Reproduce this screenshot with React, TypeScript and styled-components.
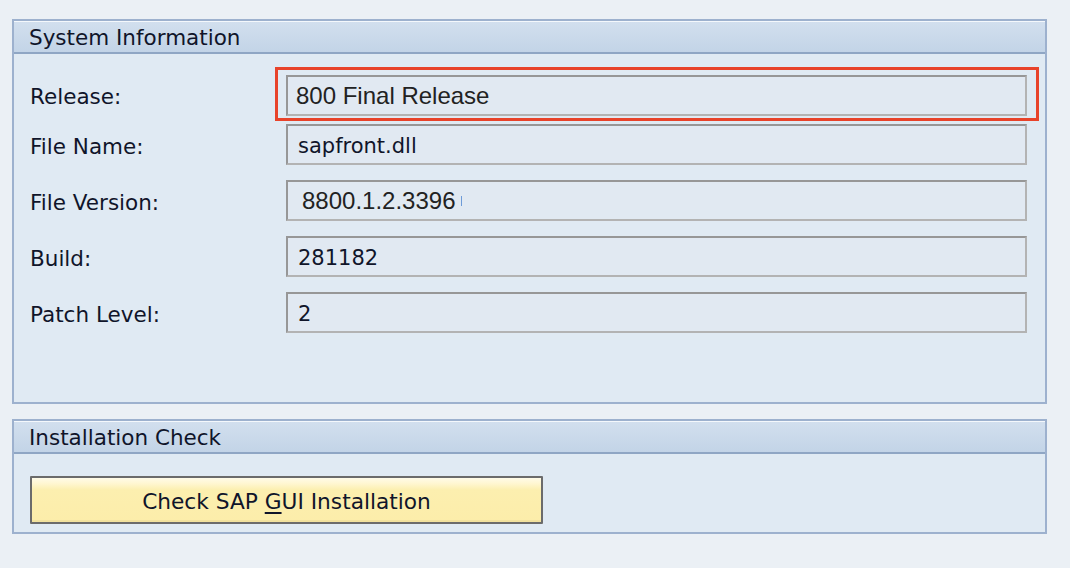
import React from "react";
import styled, { createGlobalStyle } from "styled-components";

const Global = createGlobalStyle`
  html, body { margin: 0; padding: 0; background: #ebf0f5; }
  body { font-family: "DejaVu Sans", "Liberation Sans", sans-serif; color: #101522; }
`;

const Page = styled.div`
  width: 1070px;
  height: 568px;
  box-sizing: border-box;
  padding: 19px 23px 0 12px;
  display: flex;
  flex-direction: column;
  gap: 15px;
  background: #ebf0f5;
`;

const Panel = styled.section<{ $height: number }>`
  height: ${(p) => p.$height}px;
  box-sizing: border-box;
  border: 2px solid #9db1ce;
  background: #e0eaf3;
  display: flex;
  flex-direction: column;
`;

const Header = styled.div`
  height: 33px;
  box-sizing: border-box;
  border-top: 1px solid #f4f8fc;
  border-bottom: 2px solid #8fa6c4;
  background: linear-gradient(#d2dfee, #c3d4e7);
  padding: 0 0 0 15px;
  display: flex;
  align-items: center;
  font-size: 21.5px;
  color: #10152a;
`;

const Body = styled.div<{ $pad: string }>`
  padding: ${(p) => p.$pad};
  display: flex;
  flex-direction: column;
`;

const Row = styled.div<{ $mt: number }>`
  margin-top: ${(p) => p.$mt}px;
  display: grid;
  grid-template-columns: 272px 1fr;
  align-items: center;
`;

const Label = styled.div`
  padding-left: 16px;
  padding-top: 4px;
  font-size: 21.5px;
  color: #10152a;
`;

const Highlight = styled.div<{ $on?: boolean }>`
  margin-left: ${(p) => (p.$on ? "-11px" : "0")};
  margin-right: ${(p) => (p.$on ? "-12px" : "0")};
  padding: ${(p) => (p.$on ? "5px 9px 2px 8px" : "0")};
  border: ${(p) => (p.$on ? "3px solid #e8432a" : "none")};
`;

const Field = styled.div<{ $arial?: boolean; $pl: number }>`
  height: 41px;
  box-sizing: border-box;
  border-style: solid;
  border-width: 2px;
  border-color: #979797 #b3b3b3 #b3b3b3 #979797;
  background: #e1e9f2;
  display: flex;
  align-items: center;
  padding-left: ${(p) => p.$pl}px;
  padding-top: ${(p) => (p.$arial ? "1px" : "3px")};
  font-family: ${(p) =>
    p.$arial ? `"Liberation Sans", Arial, sans-serif` : `"DejaVu Sans", sans-serif`};
  font-size: ${(p) => (p.$arial ? "24px" : "21px")};
  color: ${(p) => (p.$arial ? "#222" : "#10152a")};
`;

const Caret = styled.span`
  display: inline-block;
  width: 1px;
  height: 10px;
  margin-left: 6px;
  background: #6d9bd8;
`;

const Button = styled.button`
  width: 513px;
  height: 48px;
  box-sizing: border-box;
  margin: 2px 0 0 0;
  border: 2px solid #6b6b6b;
  border-radius: 1px;
  background: linear-gradient(#fffbe8 0px, #fff6cf 6px, #fcefaf 12px, #fcedaa 100%);
  box-shadow: inset 0 -2px 0 #f2e29e;
  font-family: "DejaVu Sans", sans-serif;
  font-size: 21.7px;
  color: #10152a;
  padding: 2px 0 0 0;
  text-align: center;
  cursor: pointer;
`;

const Key = styled.span`
  text-decoration: underline;
  text-underline-offset: 3px;
`;

const rows = [
  { label: "Release:", value: "800 Final Release", arial: true, mt: 0, pl: 8, hl: true },
  { label: "File Name:", value: "sapfront.dll", arial: false, mt: 3, pl: 10 },
  { label: "File Version:", value: "8800.1.2.3396", arial: true, mt: 15, pl: 14, caret: true },
  { label: "Build:", value: "281182", arial: false, mt: 15, pl: 10 },
  { label: "Patch Level:", value: "2", arial: false, mt: 15, pl: 10 },
];

export default function App() {
  return (
    <>
      <Global />
      <Page>
        <Panel $height={385}>
          <Header>System Information</Header>
          <Body $pad="13px 18px 0 0">
            {rows.map((r) => (
              <Row key={r.label} $mt={r.mt}>
                <Label>{r.label}</Label>
                <Highlight $on={r.hl}>
                  <Field $arial={r.arial} $pl={r.pl}>
                    {r.value}
                    {r.caret && <Caret />}
                  </Field>
                </Highlight>
              </Row>
            ))}
          </Body>
        </Panel>
        <Panel $height={115}>
          <Header>Installation Check</Header>
          <Body $pad="20px 0 0 16px">
            <Button>
              Check SAP <Key>G</Key>UI Installation
            </Button>
          </Body>
        </Panel>
      </Page>
    </>
  );
}
